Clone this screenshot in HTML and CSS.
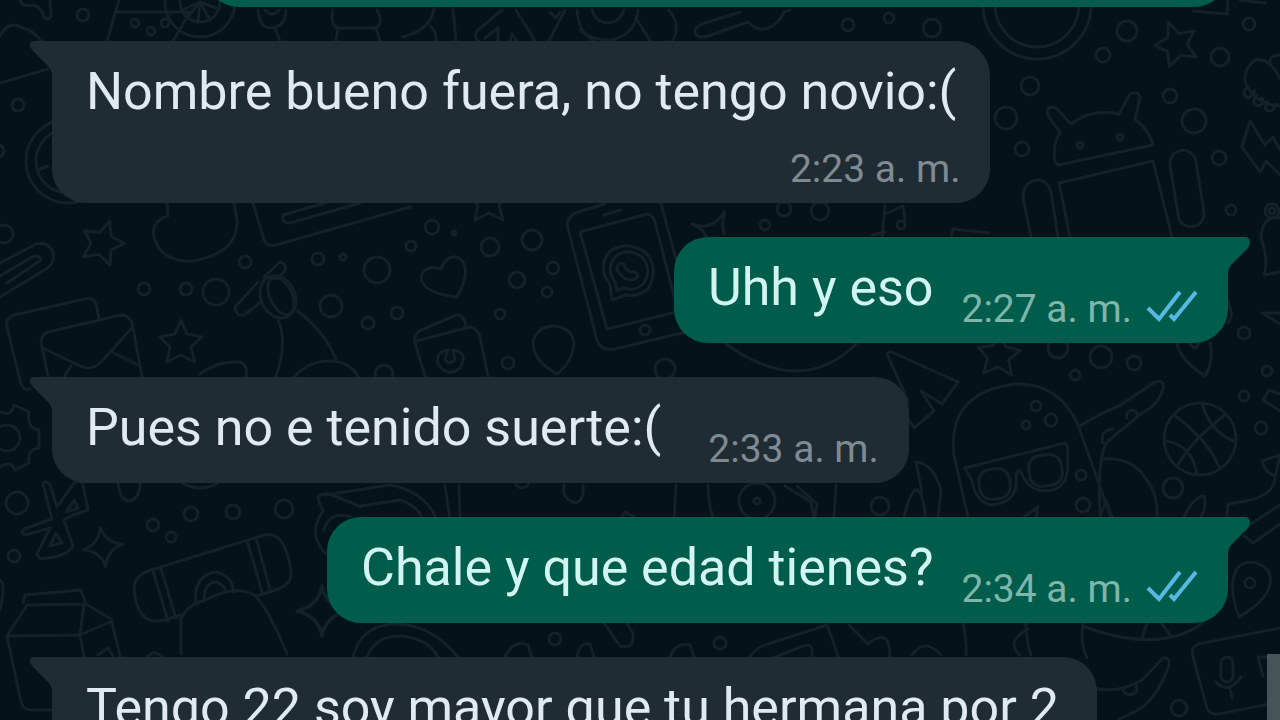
FILE: index.html
```
<!DOCTYPE html>
<html lang="es">
<head>
<meta charset="utf-8">
<meta name="viewport" content="width=device-width, initial-scale=1">
<title>Chat</title>
<link rel="stylesheet" href="styles.css">
</head>
<body>
<svg class="wallpaper" viewBox="0 0 1280 720" preserveAspectRatio="xMidYMid slice" aria-hidden="true">
  <defs>
    <path id="star" d="M0-22 L6-8 L21-5 L10 5 L14 20 L0 13 L-14 20 L-11 5 L-21-5 L-6-8Z"/>
    <path id="spark" d="M0-20 Q3-4 20 0 Q3 4 0 20 Q-3 4-20 0 Q-3-4 0-20Z"/>
  </defs>
  <!-- small bubbles -->
  <g>
    <circle cx="83" cy="15" r="6"/><circle cx="135" cy="23" r="4"/><circle cx="165" cy="23" r="4"/><circle cx="151" cy="31" r="4"/>
    <circle cx="18" cy="105" r="6"/><circle cx="-2" cy="151" r="6"/><circle cx="4" cy="234" r="9"/>
    <circle cx="144" cy="289" r="6"/><circle cx="186" cy="289" r="6"/><circle cx="216" cy="292" r="13"/><circle cx="245" cy="262" r="6"/>
    <circle cx="318" cy="259" r="6"/><circle cx="343" cy="257" r="3"/><circle cx="377" cy="270" r="13"/><circle cx="331" cy="306" r="11"/>
    <circle cx="368" cy="323" r="6"/><circle cx="397" cy="313" r="6"/><circle cx="384" cy="374" r="9"/>
    <circle cx="432" cy="227" r="7"/><circle cx="411" cy="246" r="5"/><circle cx="454" cy="233" r="2"/><circle cx="490" cy="247" r="9"/><circle cx="532" cy="240" r="10"/>
    <circle cx="517" cy="280" r="8"/><circle cx="553" cy="268" r="6"/><circle cx="547" cy="292" r="5"/><circle cx="500" cy="314" r="5"/><circle cx="508" cy="363" r="6"/>
    <circle cx="665" cy="369" r="10"/><circle cx="784" cy="209" r="7"/><circle cx="820" cy="211" r="9"/><circle cx="765" cy="225" r="5"/>
    <circle cx="848" cy="25" r="6"/><circle cx="889" cy="18" r="5"/><circle cx="932" cy="28" r="9"/>
    <circle cx="1127" cy="31" r="10"/><circle cx="1103" cy="55" r="7"/><circle cx="1030" cy="86" r="9"/><circle cx="1006" cy="118" r="11"/><circle cx="1022" cy="149" r="7"/>
    <circle cx="1249" cy="24" r="6"/><circle cx="1220" cy="57" r="9"/><circle cx="1170" cy="96" r="7"/><circle cx="1194" cy="121" r="12"/><circle cx="1219" cy="158" r="7"/><circle cx="1231" cy="210" r="5"/>
    <circle cx="1058" cy="348" r="10"/><circle cx="1101" cy="357" r="11"/><circle cx="1134" cy="363" r="7"/><circle cx="1075" cy="375" r="5"/>
    <circle cx="1244" cy="333" r="6"/><circle cx="1267" cy="371" r="5"/><circle cx="1244" cy="396" r="5"/><circle cx="1261" cy="428" r="6"/><circle cx="1173" cy="488" r="10"/>
    <circle cx="1036" cy="406" r="5"/><circle cx="1051" cy="420" r="6"/><circle cx="1026" cy="425" r="4"/><circle cx="1081" cy="475" r="5"/><circle cx="1083" cy="505" r="7"/><circle cx="880" cy="506" r="9"/>
    <circle cx="17" cy="503" r="11"/><circle cx="14" cy="556" r="6"/><circle cx="153" cy="525" r="6"/><circle cx="171" cy="537" r="5"/><circle cx="191" cy="514" r="7"/><circle cx="233" cy="512" r="7"/><circle cx="284" cy="509" r="9"/>
    <circle cx="555" cy="639" r="6"/><circle cx="720" cy="643" r="6"/><circle cx="1179" cy="708" r="8"/><circle cx="522" cy="481" r="7"/>
  </g>
  <!-- stars -->
  <use href="#star" transform="translate(103 242) rotate(18)"/>
  <use href="#star" transform="translate(181 342)"/>
  <use href="#star" transform="translate(1176 43) rotate(-20)"/>
  <use href="#star" transform="translate(999 354) rotate(4)"/>
  <use href="#star" transform="translate(489 200)"/>
  <use href="#spark" transform="translate(103 547) rotate(-8)"/>
  <use href="#spark" transform="translate(322 611) scale(1.25)"/>
  <!-- top strip -->
  <path d="M20 0 Q22 8 34 5 Q42 8 44 17 Q48 22 51 16 L50 0M0 36 Q9 19 23 28 Q34 31 41 41M119 0 L107 41M118 12 H188M190 12 L173 41"/>
  <circle cx="200" cy="2" r="20"/><circle cx="200" cy="2" r="35"/>
  <path d="M200 2 L182 10M200 2 L187 18M200 2 L198 22M200 2 L210 20M200 2 L219 9"/>
  <path d="M258 10 Q259 28 272 28 Q286 26 286 10M265 10 Q272 18 279 10M275 28 L280 41M333 10 Q330 25 338 28 H376 Q384 22 377 10M338 28 L336 41M376 28 L380 41M403 37 Q430 30 434 9M430 26 Q437 31 436 41M453 9 L456 41"/>
  <path d="M502 10 L477 31 Q473 38 479 41M516 10 L535 41M485 38 L498 28 V41M510 41 L512 34 L517 41M565 10 L549 41M550 12 L556 18 L560 12M577 10 Q578 32 594 41M580 30 Q590 40 612 40 Q636 34 638 10M592 10 Q596 23 609 23 Q620 22 624 10M636 18 L650 41M669 10 Q682 26 672 41"/>
  <path d="M740 12 L702 24 Q692 29 696 35 Q701 39 711 35 L748 22 Q760 34 772 26 Q780 22 784 12 L790 10"/>
  <circle cx="1037" cy="5" r="42"/><circle cx="1037" cy="5" r="54"/>
  <path d="M1193 11 L1227 14 L1228 0M1240 0 L1265 3"/>
  <!-- android robot -->
  <g>
    <path d="M1058 165 L1153 145 Q1149 130 1135 119 L1140 98 Q1138 90 1130 94 L1119 114 Q1093 108 1071 124 L1056 108 Q1045 104 1048 116 L1060 132 Q1052 145 1055 162Z"/>
    <path d="M1070 237 L1059 183 L1153 161 L1172 237"/>
    <circle cx="1080" cy="145" r="3"/><circle cx="1120" cy="137" r="3"/>
    <rect x="1174" y="150" width="26" height="77" rx="13" transform="rotate(-9 1187 188)"/>
    <path d="M1031 237 L1023 198 Q1023 181 1038 180 Q1049 181 1051 193 L1058 237"/>
  </g>
  <path d="M1280 79 Q1270 57 1255 60 Q1242 70 1246 85 Q1258 105 1280 106M1270 65 Q1268 55 1280 55M1247 88 Q1240 93 1248 98 Q1256 94 1254 90M1257 95 Q1250 103 1259 106 Q1266 102 1262 98M1268 101 Q1261 111 1272 111 L1276 104M1280 175 L1266 161 L1260 172 L1242 147 L1250 121 L1265 145 L1273 137 L1280 150"/>
  <path d="M1280 218 Q1262 215 1261 238 Q1269 260 1264 275 L1280 272"/><circle cx="1272" cy="211" r="7"/><circle cx="1272" cy="211" r="3"/><path d="M1280 313 L1262 313 L1280 324 M1227 300 Q1235 314 1228 323"/>
  <!-- clock and notes on the left -->
  <path d="M0 83 L48 69"/><circle cx="68" cy="161" r="42"/><circle cx="68" cy="161" r="32"/><path d="M38 170 L48 166"/>
  <path d="M167 203 L168 216 Q151 221 154 237 Q161 263 194 261 Q239 252 237 220 L234 203M253 203 L264 240 Q267 247 276 245 L410 207M360 203 L290 223 Q281 224 283 215 L325 203"/>
  <!-- paperclip -->
  <path d="M0 263 L36 244 Q48 241 53 252 Q56 262 46 269 L0 297M0 276 L32 257 Q39 254 41 260 L7 283"/>
  <!-- envelope -->
  <path d="M99 318 L96 304 Q93 297 85 299 L14 315 Q5 318 7 327 L21 384 Q24 391 30 389"/>
  <path d="M48 376 L41 342 Q41 335 48 332 L121 315 Q129 315 132 323 L142 376M43 348 L80 366 Q91 371 100 363 L131 329M71 366 L64 377M112 352 L138 365"/>
  <!-- whistle and ribbon -->
  <ellipse cx="278" cy="297" rx="17" ry="22" transform="rotate(-25 278 297)"/><ellipse cx="281" cy="296" rx="11" ry="20" transform="rotate(-25 281 296)"/>
  <path d="M258 282 L235 307 Q236 317 244 315 L261 302M264 277 L280 262 Q288 264 284 272 L276 279M278 320 Q288 342 276 376M297 311 Q323 329 336 359M295 376 Q310 360 331 361 Q350 362 358 376M200 374 Q216 361 240 362 Q248 365 246 376"/>
  <!-- heart, wallet, egg -->
  <path d="M457 297 Q422 293 421 277 Q425 264 441 269 Q446 255 457 257 Q474 266 457 297Z"/>
  <path d="M425 376 L415 343 Q413 337 419 331 L456 315 Q464 314 466 327M416 341 L470 327 Q478 329 480 337 L488 376"/><path d="M448 350 Q435 352 438 364 Q448 378 460 368 Q469 352 453 350 L455 360 Q448 366 445 359Z"/>
  <path d="M557 374 Q532 360 533 341 Q539 325 555 326 Q572 328 574 343 Q573 361 557 374Z"/>
  <!-- phone -->
  <path d="M605 204 L578 212 Q565 217 568 229 L597 340 Q601 352 615 349 L690 331M580 232 L647 214 Q653 215 655 222 L675 300M580 232 L607 329 L680 311M604 215 L621 210M661 204 L679 270"/>
  <circle cx="645" cy="330" r="5"/><path d="M612 300 L610 284 Q597 269 609 252 Q626 240 645 252 Q660 268 648 289 Q638 297 626 295Z"/><path d="M617 291 L615 282 Q605 268 616 256 Q629 247 642 257 Q653 270 643 284 Q634 292 624 288Z"/><path d="M620 263 Q614 267 620 274 Q629 284 638 277 Q638 271 631 272 Q624 269 624 264Z"/>
  <path d="M692 224 Q712 232 725 211 Q721 223 724 234M692 224 Q702 228 706 236"/>
  <path d="M726 344 Q801 398 856 344M882 237 L885 206M885 214 L903 206 Q906 218 904 223M872 235 L885 232"/><circle cx="901" cy="225" r="4"/>
  <path d="M951 237 L953 229 L989 233"/>
  <path d="M908 401 L887 354 Q889 350 894 353 L958 382 L942 404 L921 391 L934 411 L914 428 L902 410"/>
  <path d="M1177 343 Q1179 359 1205 376 Q1214 362 1210 343M1190 343 Q1194 353 1199 343"/>
  <!-- hooded figure with glasses -->
  <path d="M968 517 L954 455 Q947 393 1014 384 Q1059 382 1078 425 L1110 515M965 468 L1065 443 Q1069 445 1067 456 Q1072 491 1044 491 Q1028 490 1021 472 Q1018 469 1016 474 Q1020 503 991 505 Q976 502 972 481Z"/>
  <rect x="979" y="469" width="31" height="30" rx="12" transform="rotate(-7 994 483)"/><rect x="1029" y="455" width="33" height="31" rx="12" transform="rotate(-7 1045 470)"/>
  <path d="M1080 426 Q1102 412 1119 406 L1155 382 Q1164 379 1163 388 Q1160 404 1142 413 L1108 441 Q1097 453 1100 515M1127 418 Q1125 411 1133 410 Q1139 413 1137 417M1103 443 Q1099 431 1113 429M1104 459 Q1132 457 1146 479 Q1158 493 1157 517"/>
  <!-- basketball -->
  <circle cx="1200" cy="439" r="36"/><path d="M1174 415 Q1208 440 1219 467M1202 403 Q1210 432 1234 441M1225 415 Q1192 440 1178 465M1166 441 Q1192 445 1197 474"/>
  <path d="M1280 394 L1269 390 L1263 400 L1280 411M1280 455 L1262 461 Q1266 474 1275 476 Q1280 458 1280 455M1275 478 Q1273 496 1246 501 L1228 504 L1227 516M1280 505 L1249 525M1280 524 L1253 543 L1244 536M1184 517 Q1194 496 1204 496 Q1207 506 1201 517"/>
  <path d="M916 462 Q933 463 941 490 L938 517M916 462 L922 492M904 517 Q911 488 918 490 Q925 500 925 517M1024 517 L1038 507 L1036 517M1100 517 L1106 500 L1112 517"/>
  <!-- gear, pinwheel -->
  <circle cx="7" cy="438" r="13"/><path d="M0 412 Q12 417 14 405 L29 412 Q26 428 39 430 V448 Q27 449 29 463 L15 470 Q11 460 0 467"/>
  <path d="M43 484 Q46 479 50 485 L57 507 L74 483 L82 480 L88 510 Q67 517 64 520 L73 546 Q67 557 40 559 L37 554 L50 528 L25 535 Q20 533 24 529 L52 519Z"/><path d="M74 500 L66 512 L78 508ZM56 533 L50 546 L62 543Z"/><path d="M118 483 Q120 501 130 501 Q140 498 140 483M182 483 Q200 493 218 483"/>
  <!-- rolled towel -->
  <path d="M145 617 Q135 609 134 587 Q135 575 151 570 L264 535 Q278 532 285 548 Q295 574 288 583 Q280 590 257 596M145 617 Q153 626 180 615M153 571 L168 621M161 569 L176 618M247 540 L262 592M256 538 L270 589M181 654 V619 Q187 605 205 600 Q236 584 256 596 Q271 614 287 654M196 604 Q193 575 216 572 Q234 577 233 592M204 601 Q204 582 217 582 Q225 586 226 592"/>
  <!-- milk carton -->
  <path d="M7 636 L27 605 L84 604 L80 635ZM23 603 L25 595 L81 590 L86 604 L111 619 L120 656M7 636 L21 702 Q24 711 32 710 L55 710M80 636 L84 656M80 635 L112 621M0 580 Q6 583 0 610M98 655 L108 648 L113 656M148 656 L154 652 L161 656"/>
  <!-- jars behind the centre -->
  <path d="M325 553 Q307 533 323 511 L318 499 Q318 493 330 494 L361 507 M325 495 L390 485 Q423 491 435 516M360 506 L400 500 Q417 506 421 516M324 530 Q330 510 351 517M445 485 L450 520M459 485 L460 520M564 485 Q561 499 576 503 Q585 499 583 485M620 520 L625 512 L648 524M676 485 L674 520M708 485 Q709 510 714 519M785 486 L811 502 L814 518M797 486 L817 504 L815 519M836 485 L834 517"/>
  <circle cx="757" cy="501" r="18"/><circle cx="757" cy="501" r="3"/>
  <!-- lower strip -->
  <path d="M353 657 Q361 624 397 624 Q432 625 458 657M367 657 Q375 636 400 636 Q428 638 438 657M505 657 Q513 639 528 645 L532 657M577 657 Q580 641 590 644 L594 657M604 623 L620 646 Q634 650 633 634 L627 623M670 657 Q675 642 690 645 L694 657M750 657 Q753 650 765 645 L827 625 Q833 640 838 657M775 657 L806 645 Q815 645 811 657M849 625 L868 644 Q890 626 890 657M963 623 Q967 641 966 655M1028 629 Q1005 642 1020 655M1026 623 Q1026 642 1031 655M912 655 Q925 637 941 655"/>
  <path d="M1083 623 Q1080 644 1087 658M1085 627 Q1163 655 1205 621M1147 623 L1142 638M1161 623 L1171 636M1095 688 Q1118 694 1142 680 L1163 658 Q1170 656 1169 665 Q1155 705 1130 714L1118 720M1123 691 Q1129 698 1137 691 L1136 683"/>
  <!-- map pin and microphone -->
  <path d="M1239 617 Q1226 582 1239 566 Q1254 557 1268 570 Q1279 594 1239 617Z"/><circle cx="1250" cy="583" r="5"/>
  <path d="M1280 628 L1198 644 Q1190 648 1193 657 L1207 708 Q1210 715 1219 714 L1280 702"/><rect x="1221" y="657" width="12" height="25" rx="6"/><path d="M1216 682 Q1228 695 1241 677M1230 689 L1232 698M1270 657 H1258 L1263 676"/>
</svg>

<main class="chat">
  <div class="bubble bubble--out bubble--previous"></div>

  <article class="bubble bubble--in bubble--stacked">
    <svg class="tail" viewBox="0 0 24 34" aria-hidden="true"><path d="M24 0H4Q0 0 0 4Q0 7 3 10L17 24Q22 29 22 34H24Z"/></svg>
    <p class="text">Nombre bueno fuera, no tengo novio:(</p>
    <time class="time" datetime="02:23">2:23 a. m.</time>
  </article>

  <article class="bubble bubble--out">
    <svg class="tail" viewBox="0 0 24 38" aria-hidden="true"><path d="M0 0H19Q23 1 23 5Q23 8 21 11L4 28Q1 32 1 38H0Z"/></svg>
    <p class="text">Uhh y eso</p>
    <time class="time" datetime="02:27">2:27 a. m.</time>
    <svg class="ticks" viewBox="0 0 52 34" role="img" aria-label="Leído"><path d="M2 19L13 30L34 3M24 26L28 30L50 3"/></svg>
  </article>

  <article class="bubble bubble--in">
    <svg class="tail" viewBox="0 0 24 34" aria-hidden="true"><path d="M24 0H4Q0 0 0 4Q0 7 3 10L17 24Q22 29 22 34H24Z"/></svg>
    <p class="text">Pues no e tenido suerte:(</p>
    <time class="time" datetime="02:33">2:33 a. m.</time>
  </article>

  <article class="bubble bubble--out">
    <svg class="tail" viewBox="0 0 24 38" aria-hidden="true"><path d="M0 0H19Q23 1 23 5Q23 8 21 11L4 28Q1 32 1 38H0Z"/></svg>
    <p class="text">Chale y que edad tienes?</p>
    <time class="time" datetime="02:34">2:34 a. m.</time>
    <svg class="ticks" viewBox="0 0 52 34" role="img" aria-label="Leído"><path d="M2 19L13 30L34 3M24 26L28 30L50 3"/></svg>
  </article>

  <article class="bubble bubble--in">
    <svg class="tail" viewBox="0 0 24 34" aria-hidden="true"><path d="M24 0H4Q0 0 0 4Q0 7 3 10L17 24Q22 29 22 34H24Z"/></svg>
    <p class="text text--wide">Tengo 22 soy mayor que tu hermana por 2</p>
  </article>
</main>
<div class="corner"></div>
</body>
</html>
```
FILE: styles.css
```
* {
  box-sizing: border-box;
}

body {
  position: relative;
  height: 100vh;
  margin: 0;
  overflow: hidden;
  background: #041219;
  font-family: Roboto, sans-serif;
}

.wallpaper {
  position: absolute;
  inset: 0;
  width: 100%;
  height: 100%;
  fill: none;
  stroke: #132128;
  stroke-width: 3;
  stroke-linecap: round;
  stroke-linejoin: round;
}

.chat {
  position: relative;
  display: flex;
  flex-direction: column;
  align-items: flex-start;
  gap: 34px;
  margin-top: -99px;
  padding: 0 52px;
}

.bubble {
  position: relative;
  display: flex;
  flex-shrink: 0;
  align-items: flex-end;
  min-height: 106px;
  padding: 19px 30px 10px 34px;
  border-radius: 34px;
  white-space: nowrap;
}

.bubble--in {
  gap: 47px;
  border-top-left-radius: 0;
  background: #202c33;
  color: #e1eaf3;
}

.bubble--out {
  gap: 28px;
  align-self: flex-end;
  border-top-right-radius: 0;
  background: #005d4b;
  color: #d2f5f1;
}

.bubble--previous {
  width: 87%;
}

.bubble--stacked {
  flex-direction: column;
  gap: 8px;
}

.bubble--stacked .text {
  padding-right: 4px;
}

.text {
  margin: 0 0 13px;
  font-size: 52px;
  line-height: 64px;
}

.text--wide {
  padding-right: 8px;
}

.time {
  font-size: 39px;
  line-height: 48px;
}

.bubble--in .time {
  color: #7f8a92;
}

.bubble--out .time {
  color: #7fb5aa;
}

.tail {
  position: absolute;
  top: 0;
}

.bubble--in .tail {
  right: 100%;
  width: 24px;
  height: 34px;
  margin-right: -2px;
  fill: #202c33;
}

.bubble--out .tail {
  left: 100%;
  width: 24px;
  height: 38px;
  margin-left: -1px;
  fill: #005d4b;
}

.ticks {
  width: 52px;
  height: 34px;
  margin: 0 0 10px -14px;
  fill: none;
  stroke: #55b9e4;
  stroke-width: 4;
}

.corner {
  position: absolute;
  right: 0;
  bottom: 0;
  width: 13px;
  height: 66px;
  background: #465458;
}
```
